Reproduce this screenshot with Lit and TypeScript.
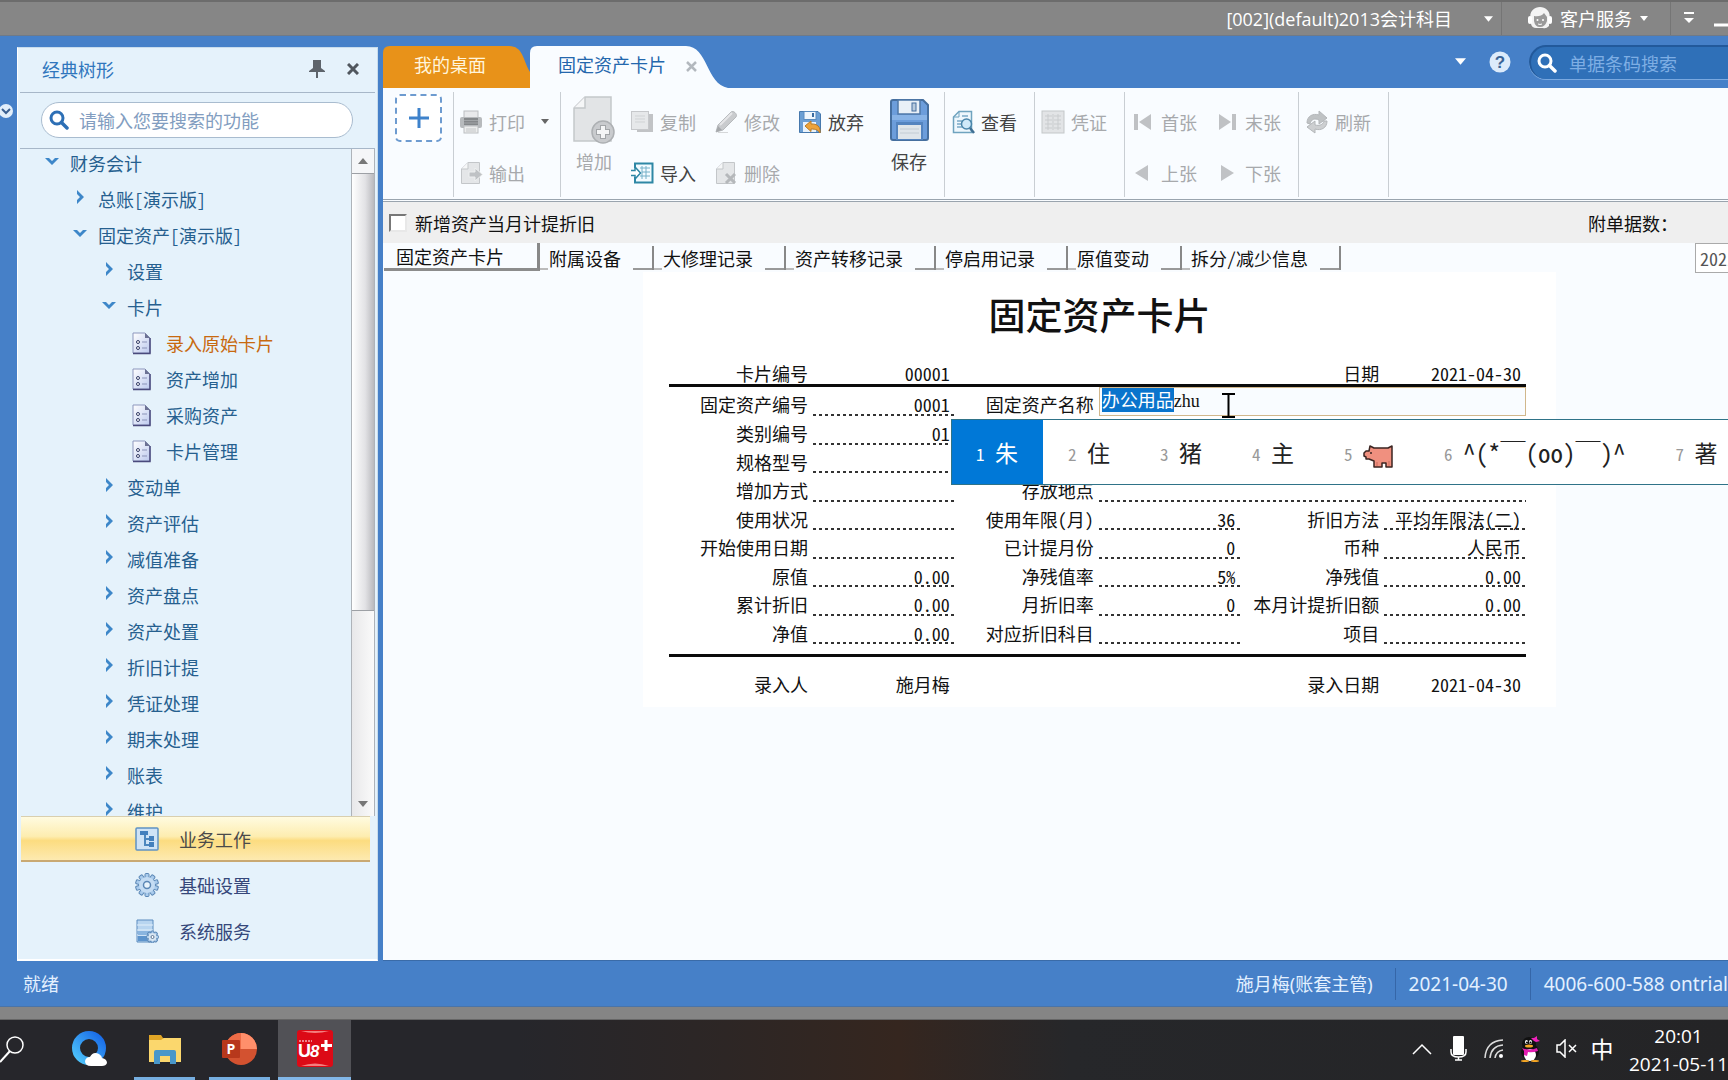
import { LitElement, html, css, svg, nothing } from "lit";
import { customElement, state, query } from "lit/decorators.js";
import { classMap } from "lit/directives/class-map.js";

const icon = (body: unknown, w = 24, h = w, cls = "ico") =>
  html`<svg class=${cls} width=${w} height=${h} viewBox="0 0 ${w} ${h}" aria-hidden="true">${body}</svg>`;

const triangle = (w = 10, h = 6) =>
  html`<svg class="tri" width=${w} height=${h} viewBox="0 0 10 6" aria-hidden="true"><path d="M0 0H10L5 6Z" fill="currentColor" /></svg>`;

const pageShape = svg`<path d="M9 1.500H20.500V22.500H2.500V8Z" fill="#e4e6e8" stroke="#c3c6c9" /><path d="M9 1.500V8H2.500" fill="#f6f7f8" stroke="#c3c6c9" />`;

const icons = {
  print: icon(svg`
    <rect x="5" y="1" width="14" height="7" fill="#e8e9eb" stroke="#bcbec1" />
    <rect x="1" y="7" width="22" height="11" rx="2" fill="#b7babd" />
    <rect x="5" y="8" width="14" height="7" fill="#85888b" />
    <path d="M5 10.500H19M5 13H19" stroke="#a2a5a8" />
    <rect x="5" y="16" width="14" height="7" fill="#eceded" stroke="#bcbec1" />
    <path d="M7 19H17M7 21H17" stroke="#c4c6c8" />`),
  output: icon(svg`${pageShape}<path d="M10 11H16V7L23.500 13.500L16 20V16H10Z" fill="#bfc2c5" stroke="#eef0f1" />`),
  copy: icon(svg`
    <rect x="7" y="4" width="16" height="18" fill="#c1c3c6" />
    <rect x="1.500" y="1.500" width="17" height="18" fill="#e6e8ea" stroke="#c6c8cb" />
    <path d="M5 6H15M5 9H15M5 12H15" stroke="#d0d3d5" />`),
  importIn: icon(svg`
    <path d="M5 7V2.500H22.500V21.500H5V16" fill="#f3fbff" stroke="#2e87a5" stroke-width="2" />
    <path d="M10 7H20M12 11H20M10 15H20M12 5V18M16 5V18" stroke="#74b0c8" />
    <path d="M1 9.500H5V6L10.500 12L5 18V14.500H1" fill="#fff" stroke="#2e87a5" stroke-width="1.500" />`),
  edit: icon(svg`
    <path d="M2 22L4 15L17 2C19 0 24 4 22 7L9 20Z" fill="#c9cbce" stroke="#b6b9bc" />
    <path d="M6 15L18 3" stroke="#e5e6e8" stroke-width="2" />
    <path d="M2 22L4 16L8 20Z" fill="#a5a8ab" /><path d="M4 22.500H14" stroke="#d5d7d9" />`),
  remove: icon(svg`${pageShape}<path d="M12 13L21 22M21 13L12 22" stroke="#b5b8bb" stroke-width="3" />`),
  discard: icon(svg`
    <path d="M1.500 1.500H20L22.500 4V22.500H1.500Z" fill="#6c9fd4" stroke="#4678ad" />
    <rect x="6" y="1.500" width="12" height="8" fill="#f0f6fc" stroke="#5b8cbf" />
    <rect x="14" y="3" width="2" height="4" fill="#3a6ba0" />
    <rect x="5" y="12" width="13" height="10" fill="#e9f2fb" />
    <path d="M7 16L13 11V14C19 13.500 23 17 22 23C20 20 18 19 13 19V21.500Z" fill="#eda33a" stroke="#b87a25" />`),
  view: icon(svg`
    <path d="M8 1.500H20.500V22.500H2.500V7Z" fill="#eef7fd" stroke="#6fa3bf" stroke-width="1.500" />
    <path d="M8 2V7H3" fill="none" stroke="#6fa3bf" />
    <path d="M6 11H11M6 14H10M6 17H11M11 6H17" stroke="#79a9c6" stroke-width="1.500" />
    <circle cx="15.500" cy="14" r="5" fill="#cfe9f9" stroke="#4a86ab" stroke-width="1.500" />
    <path d="M19 18L23 23" stroke="#3f6f93" stroke-width="2.500" />`),
  voucher: icon(svg`
    <rect x="1" y="1" width="22" height="22" fill="#e2e4e6" stroke="#c4c7c9" />
    <path d="M4 6H11M4 10H11M4 14H11M4 18H11M13 6H20M13 10H20M13 14H20M13 18H20M12 4V20M7 4V20M17 4V20" stroke="#c9ccce" />`),
  first: icon(svg`<rect x="3" y="4" width="4" height="16" fill="#bfc1c4" /><path d="M20 4V20L8 12Z" fill="#bfc1c4" />`),
  last: icon(svg`<rect x="17" y="4" width="4" height="16" fill="#bfc1c4" /><path d="M4 4V20L16 12Z" fill="#bfc1c4" />`),
  prev: icon(svg`<path d="M17 4V20L4 12Z" fill="#c0c2c5" />`),
  next: icon(svg`<path d="M6 4V20L19 12Z" fill="#c0c2c5" />`),
  refresh: icon(svg`
    <path d="M2 13C2 6 8 3 14 5L14 1L22 8L14 14V10C10 8 6 9 5 14Z" fill="#bfc2c4" stroke="#b3b6b9" />
    <path d="M22 11C22 18 16 21 10 19L10 23L2 17L10 11V15C14 16 18 15 19 11Z" fill="#cdcfd1" stroke="#b3b6b9" />`),
};

const bigAdd = icon(svg`
  <path d="M12 1H38V45H1V12Z" fill="#e2e4e6" stroke="#c4c7ca" stroke-width="1.500" />
  <path d="M12 1V12H1" fill="#f5f6f7" stroke="#c4c7ca" stroke-width="1.500" />
  <circle cx="30" cy="36" r="11" fill="#c9cbce" stroke="#adb0b3" stroke-width="1.500" />
  <path d="M30 29V43M23 36H37" stroke="#a2a5a8" stroke-width="6" />
  <path d="M30 30V42M24 36H36" stroke="#f4f5f6" stroke-width="4" />`, 42, 48, "big-ico");

const bigSave = icon(svg`
  <path d="M2 4Q2 2 4 2H34L39 7V40Q39 42 37 42H4Q2 42 2 40Z" fill="#6c9ddb" stroke="#466f9f" stroke-width="2" />
  <path d="M3 17H38V22H3Z" fill="#88b3e6" />
  <rect x="9" y="2" width="22" height="14" fill="#e9f0f7" stroke="#4f78a8" stroke-width="1.500" />
  <rect x="23" y="5" width="4" height="8" fill="#b9cbdd" stroke="#466f9f" />
  <rect x="7" y="24" width="27" height="18" fill="#5484bf" />
  <rect x="9" y="27" width="23" height="14" fill="#dfe5ea" />
  <path d="M11 31H30M11 35H30" stroke="#c3ccd4" />`, 41, 44, "big-ico");

const magnifier = (color: string) => icon(svg`
  <circle cx="8" cy="8" r="6" fill="none" stroke=${color} stroke-width="3" />
  <path d="M12.500 12.500L18 18" stroke=${color} stroke-width="3.500" stroke-linecap="round" />`, 20);

type Node = { label: string; level: number; kind: "open" | "closed" | "doc"; active?: boolean };

const tree: Node[] = [
  { label: "财务会计", level: 0, kind: "open" },
  { label: "总账[演示版]", level: 1, kind: "closed" },
  { label: "固定资产[演示版]", level: 1, kind: "open" },
  { label: "设置", level: 2, kind: "closed" },
  { label: "卡片", level: 2, kind: "open" },
  { label: "录入原始卡片", level: 3, kind: "doc", active: true },
  { label: "资产增加", level: 3, kind: "doc" },
  { label: "采购资产", level: 3, kind: "doc" },
  { label: "卡片管理", level: 3, kind: "doc" },
  ...["变动单", "资产评估", "减值准备", "资产盘点", "资产处置", "折旧计提", "凭证处理", "期末处理", "账表", "维护"].map(
    (label): Node => ({ label, level: 2, kind: "closed" })
  ),
];

const nodeIcon = {
  open: icon(svg`<path d="M1 5H5L8 8L11 5H15L8 12Z" fill="#3d87c9" />`, 16),
  closed: icon(svg`<path d="M5 1L12 8L5 15V11L8 8L5 5Z" fill="#3d87c9" />`, 16),
  doc: icon(svg`
    <defs><linearGradient id="d" x1="0" y1="0" x2="1" y2="1"><stop offset="0" stop-color="#fff" /><stop offset="1" stop-color="#bcc9ee" /></linearGradient></defs>
    <path d="M1 1H13L18 6V21H1Z" fill="url(#d)" stroke="#8d97bd" />
    <path d="M18 6V21.500H1" fill="none" stroke="#4a4a7c" stroke-width="1.500" />
    <path d="M13 1V6H18Z" fill="#6d7294" />
    <circle cx="6" cy="10" r="1.500" fill="#fff" stroke="#333c66" /><circle cx="6" cy="16" r="1.500" fill="#fff" stroke="#333c66" />
    <path d="M10 10H15M10 16H15" stroke="#8b93b8" />`, 20, 23),
};

const gearTeeth = (cx: number, cy: number, r: number, n: number, w: number) =>
  Array.from({ length: n }, (_, i) => svg`<rect x=${cx - w / 2} y=${cy - r} width=${w} height=${r} rx="1" fill="#a9cbec" stroke="#5b87b5" transform="rotate(${(360 / n) * i} ${cx} ${cy})" />`);

const navItems = [
  {
    label: "业务工作",
    art: icon(svg`
      <rect x="1" y="1" width="22" height="22" rx="1" fill="#cfe3f6" stroke="#5f93c4" stroke-width="1.500" />
      <path d="M10 7V18H14M10 12H14" fill="none" stroke="#4d87be" stroke-width="2" />
      <rect x="5" y="4" width="8" height="4" fill="#4480bd" /><rect x="14" y="9" width="5" height="5" fill="#4480bd" /><rect x="14" y="15" width="5" height="5" fill="#4480bd" />`),
  },
  {
    label: "基础设置",
    art: icon(svg`${gearTeeth(12, 12, 11.5, 10, 4)}<circle cx="12" cy="12" r="8" fill="#c4dcf3" /><circle cx="12" cy="12" r="3.500" fill="#e8f3fb" stroke="#5b87b5" stroke-width="1.500" />`),
  },
  {
    label: "系统服务",
    art: icon(svg`
      <path d="M2 1H18V23H2Z" fill="#b8d5f0" stroke="#5b8cbf" /><path d="M2 6H18M2 11H18M2 16H18" stroke="#e3f0fa" />
      <path d="M3 17H12V22H3Z" fill="#5d94cc" /><path d="M3 12H17V16H3Z" fill="#8ab5df" />
      ${gearTeeth(17.5, 18, 6, 8, 3)}<circle cx="17.500" cy="18" r="4" fill="#d8e6f2" /><circle cx="17.500" cy="18" r="1.500" fill="#fff" stroke="#5b7593" />`),
  },
];

type Field = { label: string; value?: string; wide?: boolean; editor?: boolean };
const fields: Field[] = [
  { label: "固定资产编号", value: "0001" }, { label: "固定资产名称", wide: true, editor: true },
  { label: "类别编号", value: "01" }, { label: "", wide: true },
  { label: "规格型号" }, { label: "", wide: true },
  { label: "增加方式" }, { label: "存放地点", wide: true },
  { label: "使用状况" }, { label: "使用年限(月)", value: "36" }, { label: "折旧方法", value: "平均年限法(二)" },
  { label: "开始使用日期" }, { label: "已计提月份", value: "0" }, { label: "币种", value: "人民币" },
  { label: "原值", value: "0.00" }, { label: "净残值率", value: "5%" }, { label: "净残值", value: "0.00" },
  { label: "累计折旧", value: "0.00" }, { label: "月折旧率", value: "0" }, { label: "本月计提折旧额", value: "0.00" },
  { label: "净值", value: "0.00" }, { label: "对应折旧科目" }, { label: "项目" },
];

const sections = ["固定资产卡片", "附属设备", "大修理记录", "资产转移记录", "停启用记录", "原值变动", "拆分/减少信息"];

const pig = html`<svg class="pig" width="31" height="24" viewBox="0 0 31 24" role="img" aria-label="猪">
  <path d="M6 6L7 1L11 3H25L29 1V22H23V18H19V22H11V16L6 14H3V12L1 11V8L3 6Z" fill="#f0907f" stroke="#3b2522" stroke-width="1.500" stroke-linejoin="round" />
  <path d="M14 17V21M26 16V21" stroke="#c96a5c" /><circle cx="8" cy="8" r="1" fill="#3b2522" /></svg>`;

const candidates: unknown[] = ["朱", "住", "猪", "主", pig, html`<span class="kao">^(*￣(oo)￣)^</span>`, "著"];

@customElement("app-root")
export class AppRoot extends LitElement {
  static styles = css`
    :host { display: flex; flex-direction: column; height: 100vh; overflow: hidden; background: #4680c8; color: #111; font: 18px/24px "Noto Sans CJK SC", sans-serif; }
    * { box-sizing: border-box; }
    button, input, select { font: inherit; color: inherit; margin: 0; padding: 0; border: 0; background: none; text-align: left; border-radius: 0; }
    button { white-space: nowrap; }
    svg { display: block; flex: none; }
    ul { list-style: none; margin: 0; padding: 0; }
    .half, .half button, .half input { font-feature-settings: "hwid" 1; }

    .titlebar { flex: none; display: flex; justify-content: flex-end; height: 36px; background: #868686; border-top: 2px solid #6c6c6c; border-bottom: 1px solid #6f7a88; color: #fff; overflow: hidden; }
    .titlebar button { display: flex; align-items: center; gap: 8px; border-right: 1px solid #757575; height: 34px; }
    .titlebar .book { gap: 32px; padding-right: 8px; font-family: "Open Sans", "Noto Sans CJK SC", sans-serif; }
    .titlebar .service { padding: 0 22px 2px 26px; }
    .titlebar .more { padding: 0 19px 2px 12px; border: 0; }
    .titlebar .min { border: 0; }

    .main { flex: 1; min-height: 0; display: grid; grid-template-columns: 17px 361px 1fr; }
    .dock { padding-top: 63px; }
    .dock button { margin-left: -2px; }
    .panel { margin-top: 11px; display: flex; flex-direction: column; min-height: 0; background: #e5f2fb; border: 1px solid #c8dcec; border-left-color: #fff; border-bottom: 2px solid #fff; padding-bottom: 5px; }
    .panel-head { flex: none; display: flex; align-items: center; gap: 22px; height: 45px; margin: 0 2px; padding: 0 16px 2px 22px; border-bottom: 1px solid #a7b7c8; color: #2f76bd; }
    .panel-head h2 { flex: 1; margin: 0; font-size: 18px; font-weight: 400; }
    .find { flex: none; margin: 0 2px; padding: 9px 22px 10px 21px; border-bottom: 1px solid #a7b7c8; }
    .find label { display: flex; align-items: center; gap: 10px; height: 36px; padding: 0 7px; border: 1px solid #a9bccf; border-radius: 18px; background: #fff; }
    .find input { flex: 1; min-width: 0; outline: 0; }
    .find input::placeholder { color: #829dc0; opacity: 1; }
    .tree-area { flex: 1; min-height: 0; display: flex; overflow: hidden; }
    .tree { flex: 1; margin-top: -4px; color: #26608f; }
    .node { display: flex; align-items: center; gap: 10px; height: 36px; width: 100%; }
    .node .ico { margin-bottom: 4px; }
    .l0 { padding-left: 26px; } .l1 { padding-left: 54px; } .l2 { padding-left: 83px; }
    .l3 { padding-left: 114px; gap: 14px; }
    .l3 .ico { margin: 0; }
    .node.active { color: #c8690f; }
    .bar { width: 24px; margin-right: 2px; display: flex; flex-direction: column; align-items: center; background: linear-gradient(90deg, #e8e8ea, #fafafa); border: 1px solid #aeb3b9; border-top: 0; border-bottom: 0; color: #777; }
    .bar span { flex: none; display: grid; place-items: center; width: 100%; height: 24px; background: #f5f6f8; }
    .bar i { width: 100%; flex: 0 1 438px; background: linear-gradient(90deg, #fff, #e2e2e5 60%, #b9b9bd); border: solid #9da0a5; border-width: 1px 0; }
    .bar em { flex: 1; }
    .bar span:last-child { background: none; }
    .nav { flex: none; display: flex; flex-direction: column; margin: 0 7px 0 3px; color: #35477a; }
    .nav button { display: flex; align-items: center; gap: 20px; height: 46px; padding-left: 114px; }
    .nav .on { color: #4a4a4a; background: linear-gradient(#fffbe0, #fdedb0 45%, #fcdc80 55%, #fdeab0); border-bottom: 2px solid #c9a972; border-top: 1px solid #d9cfae; }

    .work { min-width: 0; display: flex; flex-direction: column; padding-left: 5px; margin-top: 10px; }
    .tabs { flex: none; display: flex; height: 42px; }
    .tabs > button { position: relative; height: 42px; display: flex; align-items: center; padding: 0 0 6px 31px; }
    .tabs .home { width: 147px; color: #fff5dc; }
    .tabs .card { width: 198px; padding-left: 28px; gap: 20px; color: #2467ad; }
    .tabs .shape { position: absolute; left: 0; top: 0; }
    .tabs .tab-text { position: relative; }
    .tabs .card .ico { position: relative; margin-top: 4px; }
    .tabs .tools { flex: 1; display: flex; justify-content: flex-end; align-items: center; gap: 24px; color: #fff; padding-bottom: 11px; }
    .tools .help { margin-right: -6px; }
    .tools .tri { margin-right: -1px; }
    .tools label { display: flex; align-items: center; gap: 12px; width: 199px; height: 34px; padding-left: 6px; background: #2f70b8; border: solid #22599b; border-width: 2px 0 0 2px; border-radius: 17px 0 0 17px; box-shadow: 0 1px 0 #7aa9e0; }
    .tools input { width: 150px; outline: 0; }
    .tools input::placeholder { color: #7eaee4; opacity: 1; }

    .sheet { flex: 1; min-height: 0; background: #f9fcff; border-bottom: 1px solid #3a6ba8; overflow: hidden; }
    .ribbon { display: flex; height: 114px; padding: 4px 0 0 12px; background: #f9fcff; border-bottom: 3px double #9aa4ae; color: #a7a9ac; }
    .group { display: grid; grid-auto-flow: column; grid-template-rows: 51px 51px; column-gap: 12px; padding: 4px 11px 0 6px; border-right: 1px solid #c9ced3; margin-bottom: 2px; }
    .group.start { display: block; padding: 2px 11px 0 0; }
    .group.output { padding: 4px 11px 0 5px; }
    .group.edit { padding: 4px 8px 0 3px; }
    .plus { display: grid; place-items: center; width: 47px; height: 48px; border: 2px dashed #6d9bd0; border-radius: 5px; background: #fff; }
    .tool { display: flex; align-items: center; gap: 6px; min-width: 72px; }
    .tool .tri { margin-left: 10px; color: #666; }
    .tool.live { color: #444; }
    .tool.large { grid-row: 1 / 3; flex-direction: column; justify-content: flex-start; gap: 5px; min-width: 54px; }
    .tool.large.add { padding-left: 6px; }
    .tool.large .big-ico { height: 48px; }
    .options { display: flex; align-items: center; justify-content: space-between; height: 41px; padding: 0 50px 0 6px; background: #efefef; }
    .options label { display: flex; align-items: center; gap: 8px; }
    .options input { appearance: none; width: 18px; height: 18px; background: #fff; border: 2px solid; border-color: #777 #e8e8e8 #e8e8e8 #777; }
    .sections { display: flex; height: 29px; padding-left: 1px; }
    .sections button { position: relative; padding: 0 31px 0 9px; border-right: 2px solid #888; height: 24px; margin-top: 3px; line-height: 22px; }
    .sections button::after { content: ""; position: absolute; right: 0; bottom: 0; width: 19px; height: 2px; background: #999; }
    .sections button::before { content: ""; position: absolute; left: 0; bottom: 0; width: 8px; height: 2px; background: #bbb; }
    .sections .on { height: 28px; margin: 0; padding: 0 33px 0 12px; border-right-width: 3px; border-bottom: 3px solid #8c8c8c; line-height: 26px; }
    .sections .on::after, .sections .on::before { display: none; }
    .sections select { appearance: none; margin-left: auto; width: 33px; height: 30px; padding-left: 4px; background: #fff; border: solid #aaa; border-width: 1px 0 1px 1px; color: #555; overflow: hidden; text-overflow: clip; }

    .paper { position: relative; max-width: 913px; margin-left: 260px; padding: 20px 30px 12px 26px; background: #fff; }
    .paper h1 { margin: 0 0 20px; padding-left: 4px; font-size: 37px; line-height: 44px; font-weight: 500; text-align: center; }
    .line { display: grid; grid-template-columns: repeat(3, 1fr); height: 28px; }
    .line .k, .line .v { padding-top: 4px; }
    .rule { height: 3px; background: #0b0b0b; }
    .fields { display: grid; grid-template-columns: repeat(3, 1fr); grid-template-rows: repeat(9, 1fr); height: 257px; margin-bottom: 10px; }
    .field { display: grid; grid-template-columns: 139px 1fr; column-gap: 5px; line-height: 22px; white-space: nowrap; }
    .field.wide { grid-column: span 2; }
    .field.third { grid-column: 3; }
    .field label, .field .k { text-align: right; padding-top: 6px; }
    .field .v { text-align: right; padding: 6px 5px 0 0; }
    .fields .v { background: repeating-linear-gradient(90deg, #333 0 3px, transparent 3px 6px) left bottom / 100% 2px no-repeat; }
    .line.foot { padding-top: 10px; height: auto; }
    .field input { width: 100%; height: 29px; padding: 0 0 6px 2px; border: 1px solid #d1b78c; background: #f9fcff; font-family: "Liberation Serif", "Noto Sans CJK SC", serif; line-height: 20px; outline: 0; }
    .field input::selection { background: #0a74cc; color: #fff; }

    .ime { position: absolute; left: 308px; top: 147px; display: flex; width: max-content; height: 66px; background: #fff; z-index: 2; border: 1px solid #2f7388; }
    .ime button { display: flex; align-items: center; gap: 8px; padding: 4px 25px; font-size: 23px; color: #222; }
    .ime button:last-child { padding-right: 48px; }
    .ime small { width: 11px; font-size: 17px; color: #999; padding-top: 4px; }
    .ime .kao { font-size: 25px; }
    .ime .on { background: #0078d7; color: #fff; padding-left: 24px; }
    .ime .on small { color: #fff; }
    .pig { margin-top: 10px; }
    .beam { position: absolute; left: 578px; top: 121px; z-index: 3; }

    .status { flex: none; display: flex; align-items: center; height: 46px; padding: 0 0 0 23px; color: #e3f0ff; border-bottom: 1px solid #4a74a8; font-family: "Noto Sans", "Noto Sans CJK SC", sans-serif; }
    .status .ready { flex: 1; }
    .status span + span { padding: 4px 22px 4px 13px; border-left: 1px solid #3566a8; font-size: 19px; white-space: nowrap; }
    .status span.user { border: 0; font-size: 18px; }
    .status span:last-child { padding-right: 0; }
    .edge { flex: none; height: 13px; background: #858585; border-bottom: 1px solid #666; }
    .taskbar { flex: none; display: flex; align-items: stretch; height: 60px; background: linear-gradient(90deg, #26262b 0 30%, #2d2625 42%, #35261f 52%, #26272a 62%, #242426); color: #fff; font-family: "Open Sans", "Noto Sans CJK SC", sans-serif; }
    .taskbar button { display: grid; place-items: center; border-bottom: 3px solid transparent; }
    .apps { display: flex; }
    .apps .seek { width: 51px; justify-items: start; }
    .apps .web { width: 76px; }
    .apps .run { width: 61px; margin: 0 7px; border-color: #76aee0; }
    .apps .cur { width: 73px; background: #515156; border-color: #82b7e8; margin-left: 1px; }
    .tray { flex: 1; display: flex; justify-content: flex-end; align-items: stretch; }
    .tray button { width: 36px; font-size: 23px; }
    .tray .clock { width: 99px; margin-left: 9px; display: block; font-size: 19px; line-height: 28px; padding-top: 2px; text-align: center; }
    .clock span { display: block; }
  `;

  @state() private section = 0;
  @query(".editor") private editor!: HTMLInputElement;

  firstUpdated() {
    this.editor.focus();
    this.editor.setSelectionRange(0, 4);
  }

  private tool(label: string, art: unknown, cls = "", extra: unknown = nothing) {
    return html`<button class="tool ${cls}">${art}<span>${label}</span>${extra}</button>`;
  }

  private sidebar() {
    return html`<aside class="panel">
      <header class="panel-head">
        <h2>经典树形</h2>
        ${icon(svg`<path d="M4 0H12V8L16 11V12H0V11L4 8Z" fill="#5d646b" /><path d="M8 12V18" stroke="#5d646b" stroke-width="2" />`, 16, 18)}
        ${icon(svg`<path d="M1 1L11 11M11 1L1 11" stroke="#50575e" stroke-width="3" />`, 12)}
      </header>
      <div class="find"><label>${magnifier("#2d6fb5")}<input type="text" aria-label="功能搜索" placeholder="请输入您要搜索的功能" /></label></div>
      <div class="tree-area">
        <ul class="tree half">
          ${tree.map((n) => html`<li><button class=${classMap({ node: true, ["l" + n.level]: true, active: !!n.active })}>${nodeIcon[n.kind]}<span>${n.label}</span></button></li>`)}
        </ul>
        <div class="bar" aria-hidden="true">
          <span><svg width="10" height="6" viewBox="0 0 10 6"><path d="M0 6H10L5 0Z" fill="#777" /></svg></span><i></i><em></em><span>${triangle()}</span>
        </div>
      </div>
      <nav class="nav">${navItems.map((n, i) => html`<button class=${i === 0 ? "on" : ""}>${n.art}<span>${n.label}</span></button>`)}</nav>
    </aside>`;
  }

  private ribbon() {
    return html`<div class="ribbon">
      <div class="group start"><button class="plus" aria-label="新建">${icon(svg`<path d="M10 0V20M0 10H20" stroke="#3e82cb" stroke-width="3" />`, 20)}</button></div>
      <div class="group output">${this.tool("打印", icons.print, "", triangle(8, 5))}${this.tool("输出", icons.output)}</div>
      <div class="group edit">
        ${this.tool("增加", bigAdd, "large add")}
        ${this.tool("复制", icons.copy)}${this.tool("导入", icons.importIn, "live")}
        ${this.tool("修改", icons.edit)}${this.tool("删除", icons.remove)}
        ${this.tool("放弃", icons.discard, "live")}
        ${this.tool("保存", bigSave, "large live")}
      </div>
      <div class="group">${this.tool("查看", icons.view, "live")}</div>
      <div class="group">${this.tool("凭证", icons.voucher)}</div>
      <div class="group">
        ${this.tool("首张", icons.first)}${this.tool("上张", icons.prev)}
        ${this.tool("末张", icons.last)}${this.tool("下张", icons.next)}
      </div>
      <div class="group">${this.tool("刷新", icons.refresh)}</div>
    </div>`;
  }

  private paper() {
    return html`<section class="paper half">
      <h1>固定资产卡片</h1>
      <div class="line">
        <div class="field"><span class="k">卡片编号</span><span class="v">00001</span></div>
        <div class="field third"><span class="k">日期</span><span class="v">2021-04-30</span></div>
      </div>
      <div class="rule"></div>
      <div class="fields">
        ${fields.map((f) => html`<div class=${classMap({ field: true, wide: !!f.wide })}>
          ${f.editor
            ? html`<label for="asset-name">${f.label}</label><input id="asset-name" class="editor" type="text" value="办公用品zhu" />`
            : html`<span class="k">${f.label}</span><span class="v">${f.value ?? ""}</span>`}
        </div>`)}
      </div>
      <div class="rule"></div>
      <div class="line foot">
        <div class="field"><span class="k">录入人</span><span class="v">施月梅</span></div>
        <div class="field third"><span class="k">录入日期</span><span class="v">2021-04-30</span></div>
      </div>
      <div class="ime">
        ${candidates.map((c, i) => html`<button class=${i === 0 ? "on" : ""}><small>${i + 1}</small><span>${c}</span></button>`)}
      </div>
      <svg class="beam" width="15" height="25" viewBox="0 0 15 25" aria-hidden="true"><path d="M1 1H14M1 24H14M7.500 1V24" stroke="#000" stroke-width="2" /></svg>
    </section>`;
  }

  private taskbar() {
    return html`<footer class="taskbar">
      <div class="apps">
        <button class="seek" aria-label="搜索">${icon(svg`<circle cx="15" cy="10" r="8" fill="none" stroke="#fff" stroke-width="1.500" /><path d="M10 16L0 27" stroke="#fff" stroke-width="2" />`, 26, 28)}</button>
        <button class="web" aria-label="浏览器">${icon(svg`
          <defs><linearGradient id="q" x1="0" y1="1" x2="1" y2="0"><stop offset="0" stop-color="#4fc6fb" /><stop offset="1" stop-color="#1768e8" /></linearGradient></defs>
          <circle cx="18" cy="18" r="13" fill="none" stroke="url(#q)" stroke-width="8" />
          <path d="M20 36Q14 36 14 31Q15 27 19 27Q22 21 28 24Q31 26 31 28Q36 29 36 33Q35 36 31 36Z" fill="#fff" />`, 37)}</button>
        <button class="run" aria-label="文件资源管理器">${icon(svg`
          <path d="M0 1H12L14 4H32V28H0Z" fill="#e0a526" /><path d="M0 6H12L15 4H32V28H0Z" fill="#fbd76d" />
          <path d="M5 30V18Q5 16 7 16H25Q27 16 27 18V30H21V22H11V30Z" fill="#4a97c9" />`, 32, 30)}</button>
        <button class="run" aria-label="演示文稿">${icon(svg`
          <circle cx="19" cy="18" r="16" fill="#d35230" /><path d="M19 2A16 16 0 0 1 35 18H19Z" fill="#ff8f6b" /><path d="M3 18A16 16 0 0 1 19 2V18Z" fill="#ed6c47" />
          <rect x="0" y="9" width="18" height="18" rx="1" fill="#b7381c" />
          <text x="9" y="23" text-anchor="middle" font-family="Open Sans" font-weight="700" font-size="14" fill="#fff">P</text>`, 36)}</button>
        <button class="cur" aria-label="U8+">${icon(svg`
          <rect width="36" height="37" rx="3" fill="#dc0a16" /><path d="M4 1H32Q18 5 4 1ZM4 36H32Q18 31 4 36Z" fill="#f47e7e" />
          <path d="M2 11H15" stroke="#fff" stroke-dasharray="2 1" />
          <text x="1" y="27" font-family="Liberation Sans" font-weight="700" font-size="18" fill="#fff">U</text>
          <text x="13" y="27" font-family="Liberation Sans" font-style="italic" font-weight="700" font-size="17" fill="#fff">8</text>
          <path d="M29 10V21M24 15.500H35" stroke="#fff" stroke-width="3" />`, 36, 37)}</button>
      </div>
      <div class="tray">
        <button aria-label="显示隐藏的图标">${icon(svg`<path d="M1 11L10 2L19 11" fill="none" stroke="#fff" stroke-width="1.500" />`, 20, 12)}</button>
        <button aria-label="麦克风">${icon(svg`<rect x="3" y="0" width="11" height="19" rx="1" fill="#fff" /><path d="M1 13V16Q1 21 8.500 21Q16 21 16 16V13M8.500 21V24M5 24H12" fill="none" stroke="#fff" stroke-width="1.500" />`, 17, 25)}</button>
        <button aria-label="网络">${icon(svg`<path d="M1 20Q2 3 19 2M6 20Q7 8 19 7M11 20Q12 13 19 12" fill="none" stroke="#ddd" stroke-width="1.500" /><circle cx="17" cy="18" r="2" fill="#fff" />`, 20, 21)}</button>
        <button aria-label="QQ">${icon(svg`
          <ellipse cx="10" cy="16" rx="9" ry="8" fill="#111" /><circle cx="9" cy="8" r="7" fill="#111" />
          <ellipse cx="10" cy="19" rx="6" ry="6" fill="#fff" /><ellipse cx="6.500" cy="6" rx="1.500" ry="2" fill="#fff" /><ellipse cx="10.500" cy="6" rx="1.500" ry="2" fill="#fff" />
          <circle cx="7" cy="6.500" r="1" /><circle cx="10.500" cy="6.500" r="1" /><ellipse cx="9" cy="10" rx="4" ry="1.500" fill="#f5a623" />
          <path d="M2 12Q9 15 17 12L18 15Q12 17 8 16L7 20L4 19L4 15Z" fill="#e21cb0" /><path d="M11 2L14 2L17 0L17 3L20 5L16 6L14 5Z" fill="#ee22bb" />
          <ellipse cx="5" cy="25" rx="4" ry="1" fill="#f5a623" /><ellipse cx="15" cy="25" rx="4" ry="1" fill="#f5a623" />`, 20, 26)}</button>
        <button aria-label="音量">${icon(svg`<path d="M1 6H4L9 1V18L4 13H1Z" fill="none" stroke="#fff" stroke-width="1.500" /><path d="M13 6L20 13M20 6L13 13" stroke="#fff" stroke-width="1.500" />`, 21, 19)}</button>
        <button>中</button>
        <button class="clock"><span>20:01</span><span>2021-05-11</span></button>
      </div>
    </footer>`;
  }

  render() {
    return html`
      <header class="titlebar">
        <button class="book">[002](default)2013会计科目 ${triangle(9, 6)}</button>
        <button class="service">
          ${icon(svg`
            <path d="M3 13C0 4 7 0 12 0S24 4 21 13V19Q18 22 15 21H8Q4 21 3 17Z" fill="#f4f4f4" />
            <path d="M6 9Q13 10 16 6L19 10V14Q17 20 12 20Q7 20 6 14Z" fill="#9a9a9a" />
            <circle cx="9.500" cy="13" r="1" fill="#fff" /><circle cx="15" cy="13" r="1" fill="#fff" /><path d="M10 17Q12 18 14 17" stroke="#fff" fill="none" />
            <rect x="0" y="9" width="4" height="8" rx="2" fill="#fff" /><rect x="20" y="9" width="4" height="8" rx="2" fill="#fff" />`, 24, 22)}
          客户服务 ${triangle(8, 5)}</button>
        <button class="more" aria-label="更多">${icon(svg`<path d="M1 1H11" stroke="#fff" stroke-width="2" /><path d="M1 6H11L6 11Z" fill="#fff" />`, 12)}</button>
        <button class="min" aria-label="最小化">${icon(svg`<path d="M0 14H14" stroke="#fff" stroke-width="3" />`, 14, 16)}</button>
      </header>
      <div class="main">
        <div class="dock"><button aria-label="展开">${icon(svg`<circle cx="8" cy="8" r="7" fill="#e2eefa" /><path d="M4 6L8 10L12 6" fill="none" stroke="#3a5f90" stroke-width="2" />`, 16)}</button></div>
        ${this.sidebar()}
        <main class="work">
          <div class="tabs">
            <button class="home">
              <svg class="shape" width="147" height="42" viewBox="0 0 147 42" aria-hidden="true"><path d="M0 42V7Q0 0 7 0H126C140 0 140 14 147 26V42Z" fill="#e89219" /></svg>
              <span class="tab-text">我的桌面</span>
            </button>
            <button class="card">
              <svg class="shape" width="198" height="42" viewBox="0 0 198 42" aria-hidden="true"><path d="M0 42V7Q0 0 7 0H156C178 0 176 38 198 42Z" fill="#f9fcff" /></svg>
              <span class="tab-text">固定资产卡片</span>
              ${icon(svg`<path d="M1 1L10 10M10 1L1 10" stroke="#b3b8be" stroke-width="2.500" />`, 11)}
            </button>
            <div class="tools">
              ${triangle(11, 7)}
              <button class="help" aria-label="帮助">${icon(svg`<circle cx="11" cy="11" r="10.500" fill="#dcebfb" /><text x="11" y="17" text-anchor="middle" font-family="Liberation Sans" font-weight="700" font-size="17" fill="#3a6496">?</text>`, 22)}</button>
              <label>${magnifier("#fff")}<input type="text" aria-label="条码搜索" placeholder="单据条码搜索" /></label>
            </div>
          </div>
          <div class="sheet">
            ${this.ribbon()}
            <div class="options">
              <label><input type="checkbox" />新增资产当月计提折旧</label>
              <span>附单据数：</span>
            </div>
            <div class="sections half">
              ${sections.map((s, i) => html`<button class=${i === this.section ? "on" : ""} @click=${() => (this.section = i)}>${s}</button>`)}
              <select aria-label="期间"><option>2021</option></select>
            </div>
            ${this.paper()}
          </div>
        </main>
      </div>
      <div class="status">
        <span class="ready">就绪</span><span class="user">施月梅(账套主管)</span><span>2021-04-30</span><span>4006-600-588 ontrial</span>
      </div>
      <div class="edge"></div>
      ${this.taskbar()}
    `;
  }
}
